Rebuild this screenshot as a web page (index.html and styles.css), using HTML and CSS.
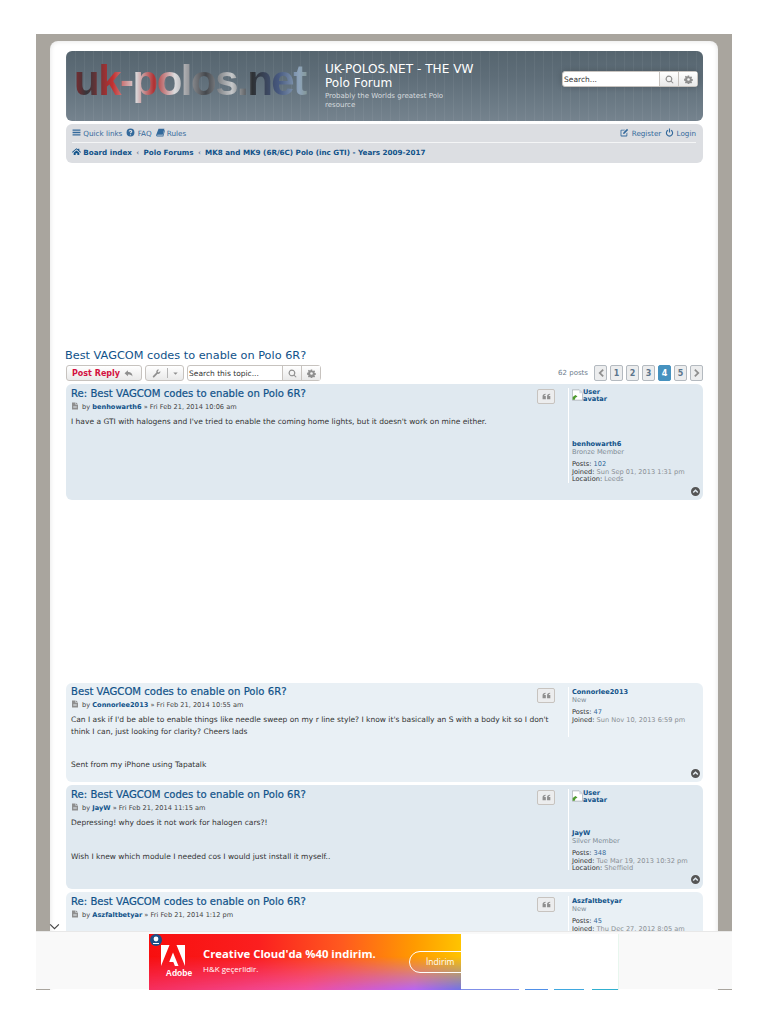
FILE: index.html
```html
<!DOCTYPE html>
<html lang="en">
<head>
  <meta charset="UTF-8">
  <meta name="viewport" content="width=device-width, initial-scale=1.0">
  <title>Best VAGCOM codes to enable on Polo 6R?</title>
  <link rel="stylesheet" href="styles.css">
</head>
<body>
  <svg class="sprite" xmlns="http://www.w3.org/2000/svg">
    <symbol id="i-bars" viewBox="0 0 16 16"><path d="M1 2.500h14v2.400H1zM1 6.800h14v2.400H1zM1 11.100h14v2.400H1z"/></symbol>
    <symbol id="i-help" viewBox="0 0 16 16"><path fill-rule="evenodd" d="M8 1a7 7 0 1 1 0 14A7 7 0 0 1 8 1zM7 11v2h2v-2zM8 3.400c-1.800 0-3 1-3.200 2.600l1.900.3c.1-.7.6-1.100 1.200-1.100s1.100.4 1.100.9c0 .5-.3.8-.9 1.200-.8.6-1.100 1.100-1.100 2.200h2c0-.6.2-.8.8-1.200.8-.6 1.300-1.200 1.300-2.300 0-1.600-1.300-2.600-3.100-2.600z"/></symbol>
    <symbol id="i-book" viewBox="0 0 16 16"><path d="M4.500 1.500H15l-3 10.500H2.600c-.8 0-.9 1.500 0 1.500H12l3-10 1 .7-3 10.800H2.200C.6 15 0 13.500.4 12z"/></symbol>
    <symbol id="i-edit" viewBox="0 0 16 16"><path d="M2.500 3H9L7.500 4.500h-5v9h9v-4L13 8v5.500A1.500 1.500 0 0 1 11.500 15h-9A1.500 1.500 0 0 1 1 13.500v-9A1.500 1.500 0 0 1 2.500 3zM12.500 1.500l2 2L8 10l-2.500.5L6 8z"/></symbol>
    <symbol id="i-power" viewBox="0 0 16 16"><path d="M7 1h2v7H7zM4.600 3.300l1.200 1.600a4.500 4.500 0 1 0 4.400 0l1.200-1.600a6.500 6.500 0 1 1-6.800 0z"/></symbol>
    <symbol id="i-home" viewBox="0 0 16 16"><path d="M8 2l3 2.600V3h2v3.300L16 9l-1 1-7-6-7 6-1-1zM3 10.200L8 6l5 4.200V14H9.500v-3h-3v3H3z"/></symbol>
    <symbol id="i-reply" viewBox="0 0 16 16"><path d="M7 2v3.500c4.500 0 8 2 8 8-1.500-3-4-3.800-8-3.800V13L1 7.500z"/></symbol>
    <symbol id="i-wrench" viewBox="0 0 16 16"><path d="M11 1a4 4 0 0 1 1.500.3L10 3.800l.5 1.700 1.700.5 2.500-2.500A4 4 0 0 1 10 8.600L4 14.600a1.500 1.500 0 0 1-2.200-2.200l6-6A4 4 0 0 1 11 1z"/></symbol>
    <symbol id="i-caret" viewBox="0 0 16 16"><path d="M3 5.500h10L8 11z"/></symbol>
    <symbol id="i-search" viewBox="0 0 16 16"><path fill-rule="evenodd" d="M7 1a6 6 0 0 1 4.800 9.600l3.400 3.400-1.300 1.300-3.400-3.400A6 6 0 1 1 7 1zm0 2a4 4 0 1 0 0 8 4 4 0 0 0 0-8z"/></symbol>
    <symbol id="i-cog" viewBox="0 0 16 16"><path fill-rule="evenodd" d="M6.700 1h2.600l.3 2 1.300.6 1.700-1.200 1.800 1.900-1.100 1.600.5 1.400 2 .3v2.600l-2 .3-.5 1.300 1.200 1.700-1.900 1.800-1.600-1.100-1.400.5-.3 2H6.700l-.3-2-1.300-.5-1.700 1.100-1.800-1.800 1.100-1.700-.5-1.300-2-.3V6.600l2-.3.5-1.300-1.100-1.700 1.800-1.800 1.700 1.100 1.300-.5zM8 5.600a2.400 2.400 0 1 0 0 4.800 2.400 2.400 0 0 0 0-4.800z"/></symbol>
    <symbol id="i-file" viewBox="0 0 16 16"><path fill-rule="evenodd" d="M2 1h7v4.500h5V15H2zM10 1l4 3.500h-4zM4.500 8v1h7V8zm0 2.500v1h7v-1z"/></symbol>
    <symbol id="i-quote" viewBox="0 0 16 16"><path d="M6.500 3v2C5 5 4 6 4 7h2.800v6H1V7.500C1 5 3 3 6.500 3zM14.500 3v2C13 5 12 6 12 7h2.800v6H9V7.500C9 5 11 3 14.500 3z"/></symbol>
    <symbol id="i-top" viewBox="0 0 16 16"><path fill-rule="evenodd" d="M8 0a8 8 0 1 1 0 16A8 8 0 0 1 8 0zM8 4L3 9l1.800 1.800L8 7.600l3.200 3.200L13 9z"/></symbol>
    <symbol id="i-prev" viewBox="0 0 16 16"><path d="M10.500 1.500l2 2L8 8l4.500 4.500-2 2L4 8z"/></symbol>
    <symbol id="i-next" viewBox="0 0 16 16"><path d="M5.500 1.500l-2 2L8 8l-4.500 4.500 2 2L12 8z"/></symbol>
    <symbol id="i-broken" viewBox="0 0 16 16"><path fill="#fff" stroke="#9aa0a6" d="M.5.500h10l5 5v10H.5z"/><path fill="#d5dbe2" d="M10.500.500v5h5z"/><path fill="#4e9a2e" d="M1 15V11l4-3 3 2-3 2-1 3z"/></symbol>
  </svg>

  <div class="backdrop">
    <div class="wrap">
      <header class="headerbar">
        <div class="logo">uk-polos.net</div>
        <div class="site-desc">
          <h1>UK-POLOS.NET - THE VW Polo Forum</h1>
          <p>Probably the Worlds greatest Polo resource</p>
        </div>
        <div class="searchbox header-search">
          <span class="search-input">Search...</span>
          <span class="search-btn"><svg class="icon"><use href="#i-search"/></svg></span>
          <span class="search-btn"><svg class="icon"><use href="#i-cog"/></svg></span>
        </div>
      </header>

      <nav class="navbar">
        <div class="nav-row">
          <a><svg class="icon"><use href="#i-bars"/></svg> Quick links</a>
          <a><svg class="icon"><use href="#i-help"/></svg> FAQ</a>
          <a><svg class="icon"><use href="#i-book"/></svg> Rules</a>
          <span class="spacer"></span>
          <a><svg class="icon"><use href="#i-edit"/></svg> Register</a>
          <a><svg class="icon"><use href="#i-power"/></svg> Login</a>
        </div>
        <div class="crumbs">
          <svg class="icon"><use href="#i-home"/></svg> <b>Board index</b>
          <i>&lsaquo;</i> <b>Polo Forums</b>
          <i>&lsaquo;</i> <b>MK8 and MK9 (6R/6C) Polo (inc GTI) - Years 2009-2017</b>
        </div>
      </nav>

      <h2 class="topic-title">Best VAGCOM codes to enable on Polo 6R?</h2>

      <div class="action-bar">
        <span class="button reply-btn">Post Reply <svg class="icon"><use href="#i-reply"/></svg></span>
        <span class="button tools-btn"><svg class="icon"><use href="#i-wrench"/></svg><em></em><svg class="icon small"><use href="#i-caret"/></svg></span>
        <div class="searchbox topic-search">
          <span class="search-input">Search this topic...</span>
          <span class="search-btn"><svg class="icon"><use href="#i-search"/></svg></span>
          <span class="search-btn"><svg class="icon"><use href="#i-cog"/></svg></span>
        </div>
        <span class="spacer"></span>
        <span class="post-count">62 posts</span>
        <div class="pagination">
          <span class="page-btn"><svg class="icon"><use href="#i-prev"/></svg></span>
          <span class="page-btn">1</span>
          <span class="page-btn">2</span>
          <span class="page-btn">3</span>
          <span class="page-btn active">4</span>
          <span class="page-btn">5</span>
          <span class="page-btn"><svg class="icon"><use href="#i-next"/></svg></span>
        </div>
      </div>

      <article class="post bg1 first-post">
        <div class="post-main">
          <div class="postbody">
            <h3>Re: Best VAGCOM codes to enable on Polo 6R?</h3>
            <p class="author"><svg class="icon"><use href="#i-file"/></svg> by <b>benhowarth6</b> &raquo; Fri Feb 21, 2014 10:06 am</p>
            <div class="content">
              <p>I have a GTI with halogens and I've tried to enable the coming home lights, but it doesn't work on mine either.</p>
            </div>
          </div>
          <span class="quote-btn"><svg class="icon"><use href="#i-quote"/></svg></span>
          <aside class="profile tall">
            <div class="avatar"><svg class="broken"><use href="#i-broken"/></svg><span>User avatar</span></div>
            <b class="username">benhowarth6</b>
            <span class="rank">Bronze Member</span>
            <dl>
              <div><dt>Posts:</dt> <dd class="num">102</dd></div>
              <div><dt>Joined:</dt> <dd>Sun Sep 01, 2013 1:31 pm</dd></div>
              <div><dt>Location:</dt> <dd>Leeds</dd></div>
            </dl>
          </aside>
        </div>
        <div class="post-foot"><svg class="icon"><use href="#i-top"/></svg></div>
      </article>

      <article class="post bg2 second-post">
        <div class="post-main">
          <div class="postbody">
            <h3>Best VAGCOM codes to enable on Polo 6R?</h3>
            <p class="author"><svg class="icon"><use href="#i-file"/></svg> by <b>Connorlee2013</b> &raquo; Fri Feb 21, 2014 10:55 am</p>
            <div class="content">
              <p>Can I ask if I'd be able to enable things like needle sweep on my r line style? I know it's basically an S with a body kit so I don't think I can, just looking for clarity? Cheers lads</p>
              <p class="gap">Sent from my iPhone using Tapatalk</p>
            </div>
          </div>
          <span class="quote-btn"><svg class="icon"><use href="#i-quote"/></svg></span>
          <aside class="profile">
            <b class="username">Connorlee2013</b>
            <span class="rank">New</span>
            <dl>
              <div><dt>Posts:</dt> <dd class="num">47</dd></div>
              <div><dt>Joined:</dt> <dd>Sun Nov 10, 2013 6:59 pm</dd></div>
            </dl>
          </aside>
        </div>
        <div class="post-foot"><svg class="icon"><use href="#i-top"/></svg></div>
      </article>

      <article class="post bg1 third-post">
        <div class="post-main">
          <div class="postbody">
            <h3>Re: Best VAGCOM codes to enable on Polo 6R?</h3>
            <p class="author"><svg class="icon"><use href="#i-file"/></svg> by <b>JayW</b> &raquo; Fri Feb 21, 2014 11:15 am</p>
            <div class="content">
              <p>Depressing! why does it not work for halogen cars?!</p>
              <p class="gap">Wish I knew which module I needed cos I would just install it myself..</p>
            </div>
          </div>
          <span class="quote-btn"><svg class="icon"><use href="#i-quote"/></svg></span>
          <aside class="profile short">
            <div class="avatar"><svg class="broken"><use href="#i-broken"/></svg><span>User avatar</span></div>
            <b class="username">JayW</b>
            <span class="rank">Silver Member</span>
            <dl>
              <div><dt>Posts:</dt> <dd class="num">348</dd></div>
              <div><dt>Joined:</dt> <dd>Tue Mar 19, 2013 10:32 pm</dd></div>
              <div><dt>Location:</dt> <dd>Sheffield</dd></div>
            </dl>
          </aside>
        </div>
        <div class="post-foot"><svg class="icon"><use href="#i-top"/></svg></div>
      </article>

      <article class="post bg2">
        <div class="post-main">
          <div class="postbody">
            <h3>Re: Best VAGCOM codes to enable on Polo 6R?</h3>
            <p class="author"><svg class="icon"><use href="#i-file"/></svg> by <b>Aszfaltbetyar</b> &raquo; Fri Feb 21, 2014 1:12 pm</p>
          </div>
          <span class="quote-btn"><svg class="icon"><use href="#i-quote"/></svg></span>
          <aside class="profile">
            <b class="username">Aszfaltbetyar</b>
            <span class="rank">New</span>
            <dl>
              <div><dt>Posts:</dt> <dd class="num">45</dd></div>
              <div><dt>Joined:</dt> <dd>Thu Dec 27, 2012 8:05 am</dd></div>
            </dl>
          </aside>
        </div>
      </article>
    </div>
  </div>

  <!-- Sticky ad on top of the page -->
  <div class="ad-strip">
    <svg class="ad-toggle" viewBox="0 0 12 8"><path d="M1 1.500l5 5 5-5" fill="none" stroke="#444" stroke-width="1.300"/></svg>
    <div class="ad-banner">
      <svg class="ad-choice" viewBox="0 0 12 12"><circle cx="6" cy="6" r="6" fill="#1d4f86"/><circle cx="6" cy="5" r="2.400" fill="#fff"/><path d="M3 9h6v1H3z" fill="#fff"/></svg>
      <div class="adobe">
        <svg viewBox="0 0 24 21"><path fill="#fff" d="M0 0h8.500L0 21zM24 0h-8.500L24 21zM12 7.500L17.500 21h-3.600l-1.600-4H8.200z"/></svg>
        <span>Adobe</span>
      </div>
      <div class="ad-copy">
        <strong>Creative Cloud'da %40 indirim.</strong>
        <span>H&amp;K geçerlidir.</span>
      </div>
      <span class="ad-cta">İndirim</span>
    </div>
    <div class="ad-blank">
      <div class="ad-bits"><i class="b1"></i><i class="b2"></i><i class="b3"></i><i class="b4"></i></div>
    </div>
  </div>
</body>
</html>
```

FILE: styles.css
```css
/* Reset */
* {
  margin: 0;
  padding: 0;
  box-sizing: border-box;
}

body {
  background: #fff;
  font-family: "DejaVu Sans", Verdana, sans-serif;
  font-size: 8px;
  color: #333;
  height: 1024px;
  overflow: hidden;
  position: relative;
}

.sprite {
  display: none;
}

.icon {
  width: 9px;
  height: 9px;
  fill: currentColor;
  vertical-align: -1px;
}

.spacer {
  flex: 1;
}

/* Page frame */
.backdrop {
  margin: 34px 36px 0;
  height: 956px;
  overflow: hidden;
  background: #a9a59e;
  padding: 7px 14px 0;
}

.wrap {
  background: #fff;
  height: 1000px;
  border-radius: 8px 8px 0 0;
  padding: 10px 15px 0 16px;
  box-shadow: inset 0 0 5px rgba(0, 0, 0, 0.12);
}

/* Header */
.headerbar {
  display: flex;
  align-items: flex-start;
  height: 70px;
  border-radius: 6px;
  color: #fff;
  background:
    repeating-linear-gradient(90deg, rgba(255, 255, 255, 0.05) 0, rgba(255, 255, 255, 0.05) 1px, transparent 1px, transparent 9px),
    linear-gradient(#56656f, #5f6e79 40%, #75838e);
}

.logo {
  width: 259px;
  flex: none;
  padding: 8px 0 0 8px;
  font-family: "Liberation Sans", Arial, sans-serif;
  font-size: 42px;
  font-weight: bold;
  line-height: 44px;
  letter-spacing: -1.500px;
  white-space: nowrap;
  color: transparent;
  background: linear-gradient(90deg, #b3262a 0, #35353a 8%, #c23030 18%, #d9d9db 27%, #b03032 34%, #dcdcde 42%, #44474c 54%, #c6c8ca 64%, #2e3135 72%, #46587f 82%, #8ea4bb 90%, #6d7a45 100%);
  -webkit-background-clip: text;
  background-clip: text;
}

.site-desc {
  width: 170px;
  padding-top: 11px;
}

.site-desc h1 {
  font-size: 12.100px;
  font-weight: normal;
  line-height: 14px;
}

.site-desc p {
  width: 130px;
  font-size: 7px;
  line-height: 9px;
  margin-top: 2px;
  color: #d6dbdf;
}

.searchbox {
  display: flex;
  background: #fff;
  border: 1px solid #c7c3bf;
  border-radius: 3px;
  height: 16px;
  color: #606060;
  box-shadow: 0 0 6px rgba(0, 0, 0, 0.2);
}

.header-search {
  margin: 20px 0 0 67px;
}

.search-input {
  width: 96px;
  padding: 1px 1px 0;
  font-size: 7.500px;
  line-height: 14px;
  color: #333;
  white-space: nowrap;
}

.search-btn {
  width: 19px;
  display: flex;
  align-items: center;
  justify-content: center;
  border-left: 1px solid #c7c3bf;
  background: linear-gradient(#fff, #e9e9e9);
  color: #8f8f8f;
}

/* Nav */
.navbar {
  margin-top: 3px;
  height: 39px;
  padding: 0 7px 0 6px;
  background: #dcdee2;
  border-radius: 6px;
  color: #105289;
  font-size: 7.200px;
}

.navbar a {
  margin-right: 4px;
  white-space: nowrap;
}

.navbar a:last-child {
  margin-right: 0;
}

.nav-row {
  display: flex;
  align-items: center;
  height: 19px;
  border-bottom: 1px solid #f4f5f6;
  color: #33699b;
}

.crumbs {
  padding-top: 4px;
  white-space: nowrap;
}

.crumbs b {
  font-weight: bold;
}

.crumbs i {
  font-style: normal;
  color: #536482;
  margin: 0 2px;
}

/* Topic head */
.topic-title {
  margin: 185px 0 0 -1px;
  font-size: 11.300px;
  font-weight: normal;
  line-height: 15px;
  color: #105289;
}

.action-bar {
  display: flex;
  align-items: center;
  height: 16px;
  margin: 2px 0 3px;
}

.button {
  display: flex;
  align-items: center;
  height: 16px;
  border: 1px solid #c7c3bf;
  border-radius: 3px;
  background: linear-gradient(#fff, #e9e9e9);
  color: #8f8f8f;
}

.reply-btn {
  width: 76px;
  gap: 4px;
  padding-left: 5px;
  color: #d31141;
  font-weight: bold;
}

.reply-btn .icon {
  color: #8f8f8f;
}

.tools-btn {
  width: 39px;
  margin-left: 3px;
  padding-left: 6px;
}

.tools-btn em {
  height: 10px;
  margin: 0 4px 0 6px;
  border-left: 1px solid #b5b5b5;
}

.icon.small {
  width: 7px;
  height: 7px;
  vertical-align: 0;
}

.topic-search {
  margin-left: 3px;
  box-shadow: none;
}

.topic-search .search-input {
  width: 94px;
}

.post-count {
  margin-right: 6px;
  font-size: 7px;
  color: #6c7c8c;
}

.pagination {
  display: flex;
  gap: 3px;
}

.page-btn {
  width: 13px;
  height: 16px;
  display: flex;
  align-items: center;
  justify-content: center;
  background: #ecedee;
  border: 1px solid #b4bac0;
  border-radius: 2px;
  color: #5c758c;
  font-weight: bold;
}

.page-btn .icon {
  width: 10px;
  height: 10px;
  color: #8f8f8f;
}

.page-btn.active {
  background: #4692bf;
  border-color: #4692bf;
  color: #fff;
}

/* Posts */
.post {
  border-radius: 6px;
  padding: 4px 2px 0 5px;
  margin-bottom: 3px;
}

.bg1 {
  background: #e0e9f0;
}

.bg2 {
  background: #e9f0f5;
}

.first-post {
  margin-bottom: 183px;
}

.post-main {
  display: flex;
  align-items: flex-start;
}

.postbody {
  width: 466px;
}

.postbody h3 {
  font-size: 10.100px;
  font-weight: normal;
  line-height: 12px;
  color: #105289;
  -webkit-text-stroke: 0.2px #105289;
}

.second-post h3 {
  margin-top: -1px;
}

.author {
  margin-top: 2px;
  line-height: 11px;
  font-size: 6.600px;
  color: #444;
}

.author b {
  color: #105289;
}

.author .icon {
  width: 8px;
  height: 8px;
  margin-right: 1px;
  color: #8f8f8f;
}

/* The text runs on under the quote button, which floats in the original */
.content {
  width: 480px;
  margin-top: 3px;
  font-size: 7.520px;
  line-height: 12px;
  color: #333;
}

.content .gap {
  margin-top: 22px;
}

.second-post .content .gap {
  margin-top: 21px;
}

.quote-btn {
  width: 18px;
  height: 15px;
  margin-top: 1px;
  display: flex;
  align-items: center;
  justify-content: center;
  background: #ecedee;
  border: 1px solid #c7c3bf;
  border-radius: 2px;
  color: #8f8f8f;
}

.profile {
  width: 133px;
  min-height: 50px;
  margin-left: 13px;
  padding: 2px 0 0 3px;
  border-left: 1px solid #fff;
  font-size: 6.600px;
  line-height: 7.500px;
  display: flex;
  flex-direction: column;
  align-items: flex-start;
}

.profile.tall {
  height: 95px;
}

.profile.short {
  height: 81px;
}

.avatar {
  display: flex;
  flex: none;
  height: 53px;
  width: 36px;
  margin-top: -2px;
  color: #105289;
  font-weight: bold;
  line-height: 7px;
  padding-top: 1px;
}

.short .avatar {
  height: 41px;
}

.broken {
  width: 11px;
  height: 12px;
  flex: none;
}

.username {
  color: #105289;
}

.rank {
  color: #7d8a94;
}

.profile dl {
  margin-top: 5px;
}

.profile dl div {
  white-space: nowrap;
}

.profile dt,
.profile dd {
  display: inline;
}

.profile dt {
  color: #333;
}

.profile dd {
  color: #8a8f94;
}

.profile dd.num {
  color: #33699b;
}

.post-foot {
  display: flex;
  justify-content: flex-end;
  align-items: center;
  height: 17px;
  padding-right: 1px;
  color: #555;
}

.second-post .post-foot {
  margin-top: -6px;
}

.third-post .post-foot {
  height: 19px;
}

/* Ad strip */
.ad-strip {
  position: absolute;
  top: 931px;
  left: 36px;
  width: 696px;
  height: 58px;
  padding: 2px 0 0 113px;
  background: #f9f9f9;
  border-top: 1px solid #e8e8e8;
  display: flex;
}

.ad-toggle {
  position: absolute;
  left: 13px;
  top: -9px;
  width: 11px;
  height: 7px;
}

.ad-banner {
  width: 312px;
  height: 56px;
  display: flex;
  position: relative;
  color: #fff;
  overflow: hidden;
  background: linear-gradient(90deg, #f80f0f 0, #fb1f1f 35%, #ff5a1f 62%, #ff9a00 85%, #ffc400 100%);
}

.ad-banner::after {
  content: "";
  position: absolute;
  inset: 0;
  background: linear-gradient(90deg, #f5305f, #f04fa0 50%, #b864f5 85%, #6f72e8);
  -webkit-mask-image: linear-gradient(0deg, #000, transparent 60%);
  mask-image: linear-gradient(0deg, #000, transparent 60%);
}

.ad-banner > * {
  z-index: 1;
}

.ad-choice {
  position: absolute;
  top: 0;
  left: 1px;
  width: 12px;
  height: 12px;
}

.adobe {
  width: 48px;
  padding: 11px 0 0 12px;
  font-family: "Liberation Sans", Arial, sans-serif;
  font-size: 8.500px;
  font-weight: bold;
  text-align: center;
}

.adobe svg {
  display: block;
  width: 24px;
  height: 21px;
  margin-bottom: 2px;
}

.ad-copy {
  margin-left: 6px;
  width: 205px;
  padding-top: 13px;
  font-family: "Open Sans", sans-serif;
  display: flex;
  flex-direction: column;
  gap: 2px;
  font-size: 8px;
}

.ad-copy strong {
  font-size: 11.300px;
  line-height: 14px;
  font-weight: 700;
}

.ad-cta {
  position: absolute;
  left: 260px;
  top: 17px;
  width: 70px;
  height: 22px;
  border: 1px solid #fff;
  border-radius: 11px;
  font-family: "Open Sans", sans-serif;
  font-size: 8.500px;
  line-height: 20px;
  padding-left: 16px;
}

.ad-blank {
  width: 158px;
  height: 56px;
  background: #fff;
  display: flex;
  align-items: flex-end;
  border-right: 1px solid #e8f6ee;
}

.ad-bits {
  display: flex;
  height: 1px;
  width: 100%;
}

.ad-bits i {
  display: block;
}

.b1 { width: 58px; background: #7f8fe8; margin-right: 6px; }
.b2 { width: 24px; background: #4f8fe8; margin-right: 6px; }
.b3 { width: 30px; background: #3fa8e0; margin-right: 8px; }
.b4 { width: 26px; background: #30b0d0; }
```
